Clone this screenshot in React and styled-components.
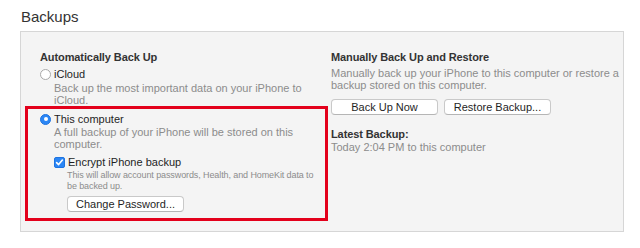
import React from "react";
import styled, { createGlobalStyle } from "styled-components";

const Global = createGlobalStyle`
  html, body {
    margin: 0;
    padding: 0;
    background: #fff;
  }
  body {
    font-family: "Liberation Sans", "Noto Sans", sans-serif;
    -webkit-font-smoothing: antialiased;
  }
`;

const Page = styled.div`
  width: 640px;
  height: 248px;
  box-sizing: border-box;
  padding: 8px 16px 0 20px;
`;

const Title = styled.h1`
  margin: 0 0 5px 1px;
  font-size: 15px;
  line-height: 18px;
  font-weight: 400;
  color: #333;
`;

const Panel = styled.div`
  box-sizing: border-box;
  width: 604px;
  height: 201px;
  background: #f4f4f4;
  border: 1px solid #d6d6d6;
  padding: 18px 0 0 19px;
  display: grid;
  grid-template-columns: 271px 1fr;
`;

const Column = styled.div`
  display: flex;
  flex-direction: column;
`;

const Heading = styled.div`
  font-size: 11px;
  line-height: 14px;
  font-weight: 700;
  color: #333;
  letter-spacing: -0.1px;
  margin-top: ${(p) => p.$top || 0}px;
`;

const Option = styled.label`
  display: flex;
  align-items: center;
  gap: 3px;
  font-size: 11px;
  line-height: 14px;
  color: #1f1f1f;
  margin-top: ${(p) => p.$top || 0}px;
`;

const Radio = styled.span`
  box-sizing: border-box;
  width: 11px;
  height: 11px;
  border-radius: 50%;
  flex: none;
  display: flex;
  align-items: center;
  justify-content: center;
  background: ${(p) => (p.$on ? "#2b86f5" : "#fff")};
  border: 1px solid ${(p) => (p.$on ? "#1f74e0" : "#a9a9a9")};

  &::after {
    content: "";
    width: 4px;
    height: 4px;
    border-radius: 50%;
    background: #fff;
    display: ${(p) => (p.$on ? "block" : "none")};
  }
`;

const Check = styled.span`
  box-sizing: border-box;
  width: 11px;
  height: 11px;
  border-radius: 2px;
  flex: none;
  background: #2b86f5;
  border: 1px solid #1f74e0;
  display: flex;
  align-items: center;
  justify-content: center;
`;

const Desc = styled.div`
  font-size: ${(p) => (p.$small ? 9 : 11)}px;
  line-height: ${(p) => (p.$small ? 11 : 12)}px;
  letter-spacing: ${(p) => (p.$small ? "-0.1px" : "normal")};
  color: #8c8c8c;
  padding-left: ${(p) => p.$indent || 0}px;
  padding-right: ${(p) => p.$right || 0}px;
  margin-top: ${(p) => p.$top || 0}px;
`;

const Highlight = styled.div`
  margin: 0 -17px 0 -15px;
  padding: 3px 2px 6px 12px;
  border: 3px solid #e3001b;
  display: flex;
  flex-direction: column;
`;

const Nested = styled.div`
  padding-left: ${(p) => p.$indent}px;
  display: flex;
  flex-direction: column;
`;

const Buttons = styled.div`
  display: flex;
  gap: 6px;
  margin-top: ${(p) => p.$top || 0}px;
`;

const Button = styled.button`
  box-sizing: border-box;
  width: ${(p) => p.$w}px;
  height: 16px;
  padding: 0;
  background: #fff;
  border: 1px solid #c9c9c9;
  border-bottom-color: #b5b5b5;
  border-radius: 4px;
  font-family: inherit;
  font-size: 11px;
  line-height: 14px;
  color: #1f1f1f;
`;

const RightColumn = styled(Column)`
  padding-left: 20px;
`;

export default function App() {
  return (
    <Page>
      <Global />
      <Title>Backups</Title>
      <Panel>
        <Column>
          <Heading>Automatically Back Up</Heading>
          <Option $top={3}>
            <Radio />
            iCloud
          </Option>
          <Desc $indent={14} $top={1}>
            Back up the most important data on your iPhone to iCloud.
          </Desc>
          <Highlight>
            <Option>
              <Radio $on />
              This computer
            </Option>
            <Desc $indent={14} $right={14}>
              A full backup of your iPhone will be stored on this computer.
            </Desc>
            <Nested $indent={14}>
              <Option $top={5}>
                <Check>
                  <svg width="9" height="9" viewBox="0 0 9 9">
                    <path
                      d="M1.6 4.6 L3.6 6.6 L7.4 2"
                      fill="none"
                      stroke="#fff"
                      strokeWidth="1.6"
                      strokeLinecap="round"
                      strokeLinejoin="round"
                    />
                  </svg>
                </Check>
                Encrypt iPhone backup
              </Option>
              <Nested $indent={13}>
                <Desc $small $top={1}>
                  This will allow account passwords, Health, and HomeKit data to be backed up.
                </Desc>
                <Buttons $top={4}>
                  <Button $w={117}>Change Password...</Button>
                </Buttons>
              </Nested>
            </Nested>
          </Highlight>
        </Column>
        <RightColumn>
          <Heading>Manually Back Up and Restore</Heading>
          <Desc $top={3}>
            Manually back up your iPhone to this computer or restore a backup stored on this computer.
          </Desc>
          <Buttons $top={8}>
            <Button $w={107}>Back Up Now</Button>
            <Button $w={107}>Restore Backup...</Button>
          </Buttons>
          <Heading $top={12}>Latest Backup:</Heading>
          <Desc>Today 2:04 PM to this computer</Desc>
        </RightColumn>
      </Panel>
    </Page>
  );
}
